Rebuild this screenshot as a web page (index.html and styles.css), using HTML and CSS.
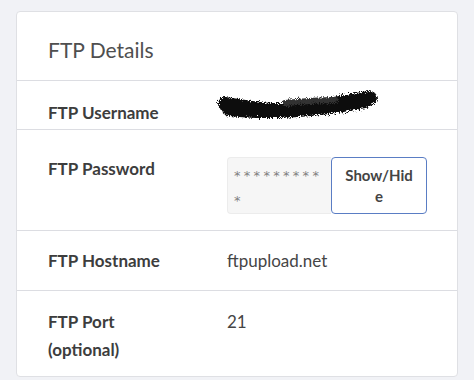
FILE: index.html
```html
<!DOCTYPE html>
<html>
<head>
<meta charset="utf-8">
<link rel="stylesheet" href="styles.css">
</head>
<body>
<div class="card">
  <div class="card-header">FTP Details</div>
  <div class="row row-user">
    <div class="label">FTP Username</div>
    <div class="value">
      <svg class="scribble" width="170" height="34" viewBox="0 0 170 34">
        <defs>
          <filter id="rough" x="-10%" y="-50%" width="120%" height="200%">
            <feTurbulence type="fractalNoise" baseFrequency="0.9" numOctaves="2" seed="5"/>
            <feDisplacementMap in="SourceGraphic" scale="7"/>
          </filter>
        </defs>
        <g filter="url(#rough)" fill="none" stroke="#111" stroke-linecap="round">
          <path d="M10 15 C35 19 55 23 85 20 C110 18 130 12 155 9" stroke-width="14"/>
          <path d="M12 22 C40 26 70 25 100 22 C120 20 138 17 152 14" stroke-width="9"/>
          <path d="M70 14 C90 12 105 11 120 11" stroke-width="6" stroke="#333"/>
        </g>
      </svg>
    </div>
  </div>
  <div class="row row-pass">
    <div class="label">FTP Password</div>
    <div class="value">
      <div class="input-group">
        <div class="pw">**********</div>
        <button class="btn"><span class="btn-text">Show/Hide</span></button>
      </div>
    </div>
  </div>
  <div class="row row-host">
    <div class="label">FTP Hostname</div>
    <div class="value">ftpupload.net</div>
  </div>
  <div class="row row-port">
    <div class="label">FTP Port<br>(optional)</div>
    <div class="value">21</div>
  </div>
</div>
</body>
</html>
```
FILE: styles.css
```css
html, body {
  margin: 0;
  padding: 0;
}
body {
  background: #f1f2f6;
  font-family: Lato, "Liberation Sans", sans-serif;
  color: #444;
  padding: 11px 16px 0 16px;
  height: 380px;
  box-sizing: border-box;
  overflow: hidden;
}
.card {
  background: #fff;
  border: 1px solid #dfe0e4;
  border-radius: 4px;
  width: 442px;
  box-sizing: border-box;
}
.card-header {
  height: 69px;
  box-sizing: border-box;
  padding: 26px 0 0 31px;
  font-size: 21px;
  line-height: 24px;
  color: #4f4f4f;
  border-bottom: 1px solid #dcdde2;
}
.row {
  display: flex;
  padding-left: 31px;
  box-sizing: border-box;
  border-bottom: 1px solid #dcdde2;
  font-size: 17px;
  line-height: 28px;
}
.row:last-child {
  border-bottom: none;
}
.label {
  width: 179px;
  flex: none;
  font-weight: bold;
  color: #3d3d3d;
}
.value {
  color: #454545;
}
.row-user {
  height: 49px;
  padding-top: 18px;
}
.row-user .value {
  margin-top: -10px;
  margin-left: -12px;
}
.scribble {
  display: block;
}
.row-pass {
  height: 101px;
  padding-top: 25px;
}
.row-pass .value {
  margin-top: 2px;
}
.input-group {
  display: flex;
  height: 57px;
}
.pw {
  width: 104px;
  box-sizing: border-box;
  background: #f6f6f6;
  border: 1px solid #ececec;
  border-right: none;
  border-radius: 4px 0 0 4px;
  padding: 5px 5px 4px 6px;
  font-family: "DejaVu Sans", sans-serif;
  font-size: 13px;
  line-height: 25px;
  letter-spacing: 3.3px;
  color: #808080;
  word-break: break-all;
}
.btn {
  width: 96px;
  box-sizing: border-box;
  background: #fff;
  border: 1px solid #5a7dc4;
  border-radius: 4px;
  padding: 0;
  font-family: Lato, "Liberation Sans", sans-serif;
  font-size: 15px;
  font-weight: bold;
  line-height: 21px;
  color: #444;
  text-align: center;
}
.btn-text {
  display: block;
  width: 70px;
  margin: 0 auto;
  word-break: break-all;
}
.row-host {
  height: 60px;
  padding-top: 16px;
}
.row-port {
  height: 85px;
  padding-top: 17px;
}
```
